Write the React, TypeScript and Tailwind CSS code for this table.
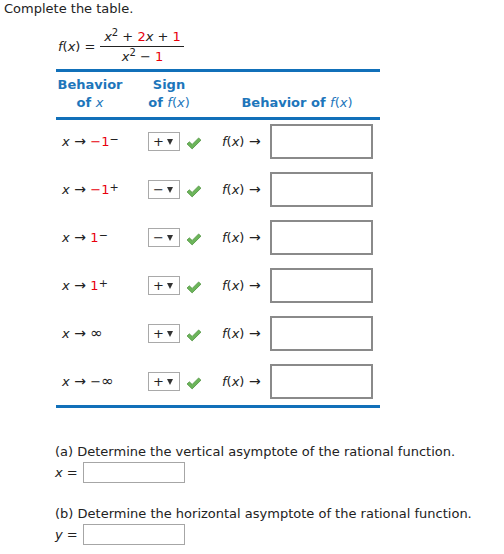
import * as React from "react";

const font = { fontFamily: '"DejaVu Sans", Verdana, sans-serif' };

function X({ children = "x" }: { children?: React.ReactNode }) {
  return <span className="italic">{children}</span>;
}

function Fx() {
  return (
    <span>
      <X>f</X>(<X />)
    </span>
  );
}

function Arrow() {
  return <span className="text-[14px]"> → </span>;
}

function Check() {
  return (
    <svg width="16" height="13" viewBox="0 0 17 14" className="ml-[6px] mt-[3px]">
      <path
        d="M1 7.5 L3.5 5.2 L6.5 8 L13.5 1 L16 3.4 L6.5 12.8 Z"
        fill="#6cb55a"
        stroke="#4b8f3c"
        strokeWidth="0.8"
        strokeLinejoin="round"
      />
    </svg>
  );
}

function Sign({ v }: { v: string }) {
  return (
    <div className="flex items-center">
      <div className="flex h-[19px] w-[32px] items-center justify-between border border-[#a9a9a9] bg-white pl-[4px] pr-[6px] text-[13px] leading-none">
        <span>{v}</span>
        <svg width="6" height="6" viewBox="0 0 6 6">
          <path d="M0 0 H6 L3 6 Z" fill="#333" />
        </svg>
      </div>
      <Check />
    </div>
  );
}

const Sup = ({ children }: { children: React.ReactNode }) => (
  <sup className="relative -top-[3px] text-[11px]">{children}</sup>
);

const rows: { label: React.ReactNode; sign: string }[] = [
  {
    label: (
      <>
        <X />
        <Arrow />
        <span className="text-[#e8000b]">−1</span>
        <Sup>−</Sup>
      </>
    ),
    sign: "+",
  },
  {
    label: (
      <>
        <X />
        <Arrow />
        <span className="text-[#e8000b]">−1</span>
        <Sup>+</Sup>
      </>
    ),
    sign: "−",
  },
  {
    label: (
      <>
        <X />
        <Arrow />
        <span className="text-[#e8000b]">1</span>
        <Sup>−</Sup>
      </>
    ),
    sign: "−",
  },
  {
    label: (
      <>
        <X />
        <Arrow />
        <span className="text-[#e8000b]">1</span>
        <Sup>+</Sup>
      </>
    ),
    sign: "+",
  },
  {
    label: (
      <>
        <X />
        <Arrow />
        <span className="text-[15px]">∞</span>
      </>
    ),
    sign: "+",
  },
  {
    label: (
      <>
        <X />
        <Arrow />−<span className="text-[15px]">∞</span>
      </>
    ),
    sign: "+",
  },
];

export default function App() {
  return (
    <div className="h-[554px] w-[504px] bg-white text-[13px] text-[#222]" style={font}>
      <p className="pl-[4px] pt-[1px] leading-[16px]">Complete the table.</p>

      {/* f(x) definition */}
      <div className="mt-[12px] flex items-center pl-[58px]">
        <span>
          <Fx /> =
        </span>
        <div className="ml-[5px] flex flex-col items-center">
          <span className="px-[2px] leading-[15px]">
            <X />
            <sup className="text-[10px]">2</sup> + <span className="text-[#e8000b]">2</span>
            <X /> + <span className="text-[#e8000b]">1</span>
          </span>
          <span className="my-[2px] h-px w-[84px] bg-[#222]" />
          <span className="leading-[15px]">
            <X />
            <sup className="text-[10px]">2</sup> − <span className="text-[#e8000b]">1</span>
          </span>
        </div>
      </div>

      {/* table */}
      <div className="ml-[56px] mt-[5px] w-[324px]">
        <div className="h-[3px] bg-[#1170b9]" />
        <div className="flex items-end pb-[5px] pt-[4px] font-bold leading-[18px] text-[#1d76bb]">
          <div className="w-[68px] text-center">
            Behavior
            <br />
            of <span className="font-normal italic">x</span>
          </div>
          <div className="w-[90px] text-center">
            Sign
            <br />
            of <span className="font-normal italic">f</span>
            <span className="font-normal">(</span>
            <span className="font-normal italic">x</span>
            <span className="font-normal">)</span>
          </div>
          <div className="w-[166px] text-center">
            Behavior of <span className="font-normal italic">f</span>
            <span className="font-normal">(</span>
            <span className="font-normal italic">x</span>
            <span className="font-normal">)</span>
          </div>
        </div>
        <div className="h-[3px] bg-[#1170b9]" />

        <div className="flex flex-col gap-[13px] pb-[6px] pt-[4px]">
          {rows.map((r, i) => (
            <div key={i} className="flex h-[35px] items-center">
              <div className="w-[92px] pl-[6px] whitespace-nowrap">{r.label}</div>
              <div className="w-[74px]">
                <Sign v={r.sign} />
              </div>
              <div className="flex items-center">
                <span className="w-[48px] whitespace-nowrap">
                  <Fx />
                  <Arrow />
                </span>
                <div className="h-[35px] w-[103px] border-2 border-[#8a8a8a] bg-white" />
              </div>
            </div>
          ))}
        </div>
        <div className="h-[3px] bg-[#1170b9]" />
      </div>

      {/* asymptote questions */}
      <div className="pl-[55px] pt-[36px]">
        <p className="leading-[16px]">(a) Determine the vertical asymptote of the rational function.</p>
        <div className="mt-[2px] flex items-center">
          <span className="w-[28px] whitespace-nowrap">
            <X /> =
          </span>
          <div className="h-[21px] w-[102px] border border-[#a6a6a6] bg-white" />
        </div>
        <p className="mt-[23px] leading-[16px]">(b) Determine the horizontal asymptote of the rational function.</p>
        <div className="mt-[2px] flex items-center">
          <span className="w-[28px] whitespace-nowrap">
            <X>y</X> =
          </span>
          <div className="h-[21px] w-[102px] border border-[#a6a6a6] bg-white" />
        </div>
      </div>
    </div>
  );
}
